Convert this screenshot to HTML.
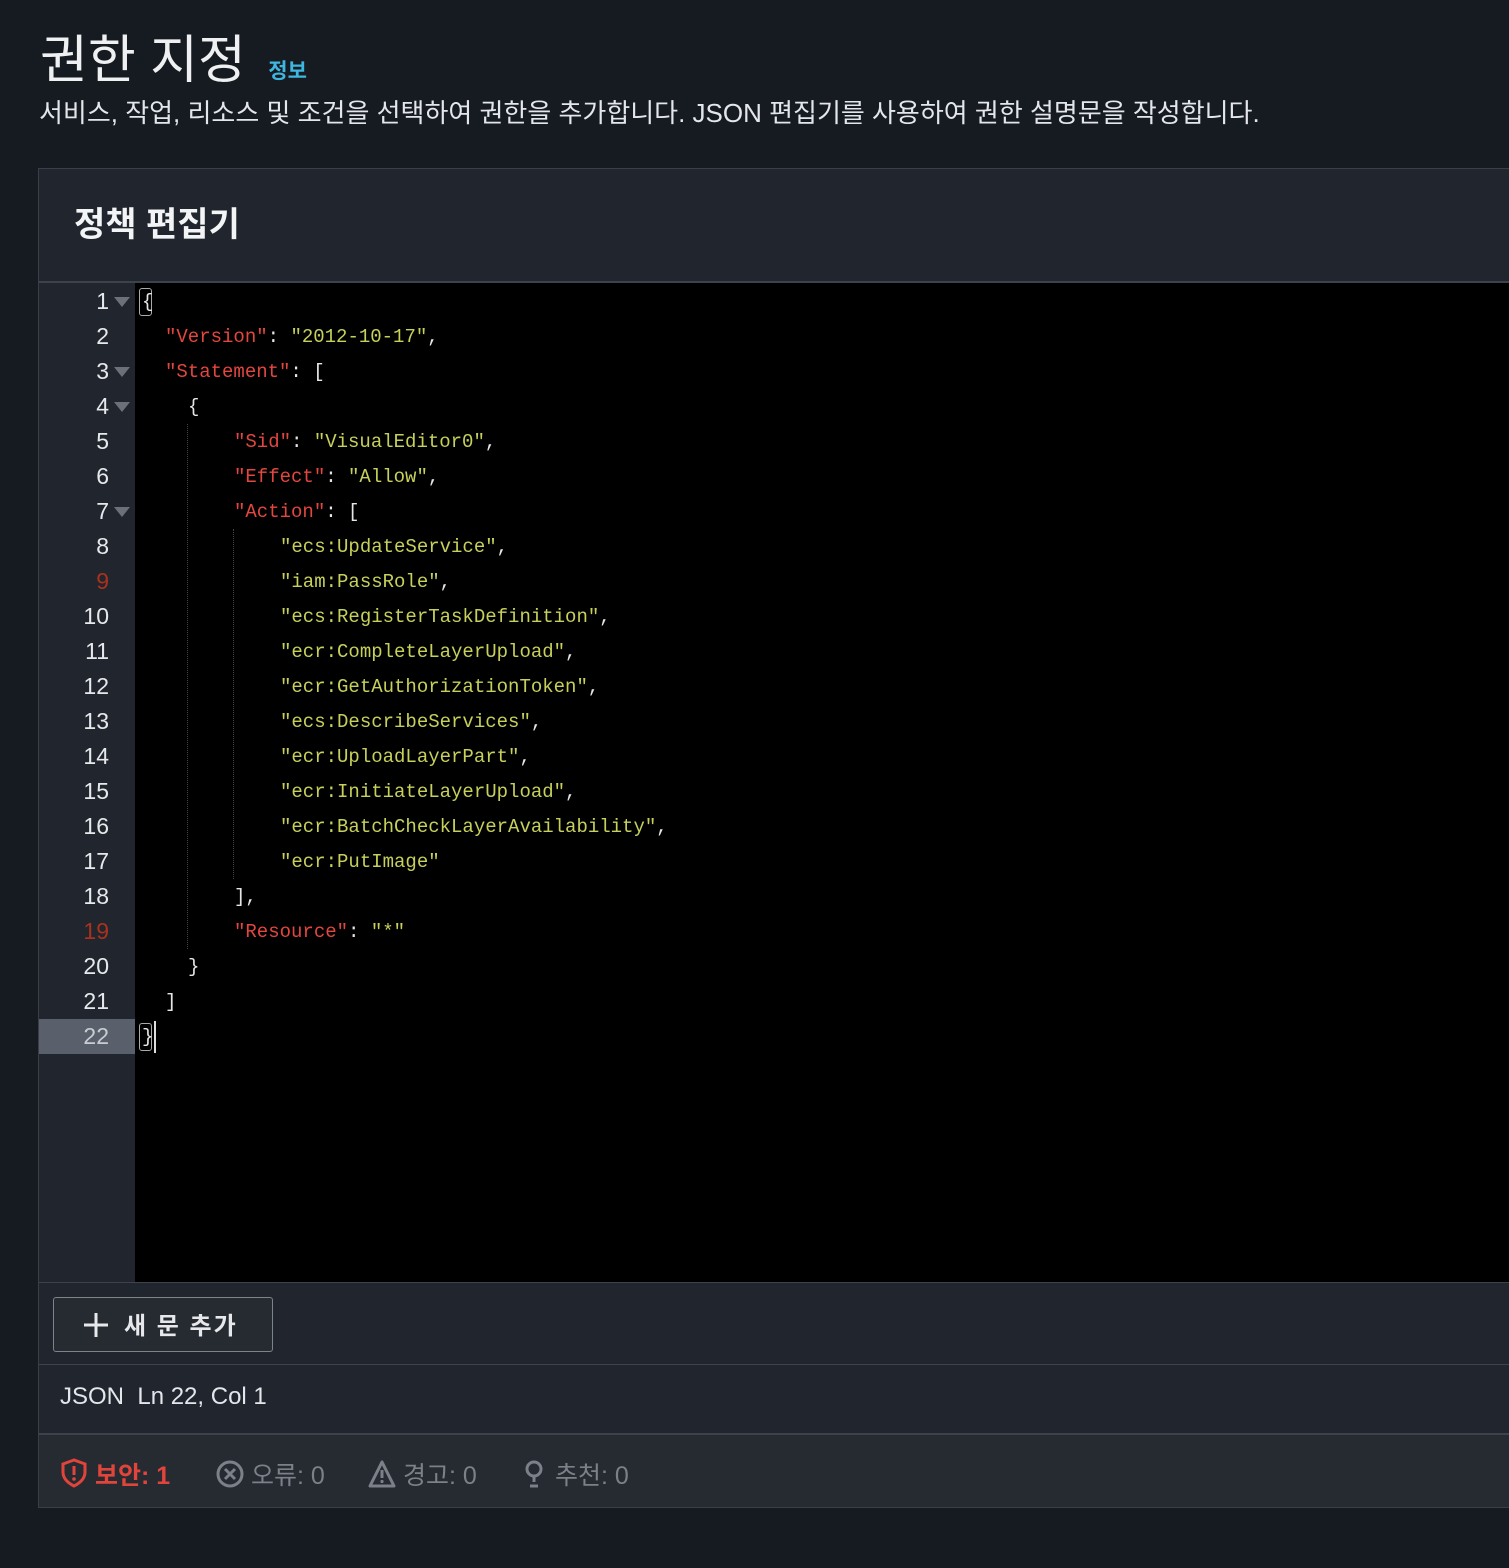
<!DOCTYPE html>
<html><head><meta charset="utf-8"><style>
*{margin:0;padding:0;box-sizing:border-box}
body{width:1509px;height:1568px;background:#161a21;font-family:"Liberation Sans","Noto Sans CJK KR",sans-serif;color:#e8eaed;position:relative;overflow:hidden}
.abs{position:absolute}
h1{position:absolute;left:40px;top:18px;font-size:52px;font-weight:400;color:#eef0f2;white-space:nowrap}
h1 span{font-size:21px;color:#3fb6e0;font-weight:700;margin-left:8px}
.desc{left:39px;top:93px;font-size:26px;color:#e3e6ea;white-space:nowrap}
.card{left:38px;top:168px;width:1480px;height:1340px;background:#21252d;border:1px solid #3a3f47}
.ed{left:39px;top:281px;width:1470px;height:1001px;background:#000;border-top:2px solid #3d434c}
.gut{left:39px;top:283px;width:96px;height:999px;background:#21252d}
.ln{position:absolute;left:39px;width:70px;text-align:right;font-family:"Liberation Sans",sans-serif;font-size:23px;color:#e6e8eb;line-height:35px}
.code{position:absolute;font-family:"Liberation Mono",monospace;font-size:19px;line-height:35px;color:#e6e6e6;white-space:pre;top:0}
.k{color:#e2463f}.s{color:#c6d05a}
.tri{position:absolute;left:114px;width:0;height:0;border-left:8px solid transparent;border-right:8px solid transparent;border-top:10px solid #6b7079}
.g{position:absolute;width:0;border-left:1px dotted #444}
</style></head><body>
<h1>권한 지정 <span>정보</span></h1>
<div class="abs desc">서비스, 작업, 리소스 및 조건을 선택하여 권한을 추가합니다. JSON 편집기를 사용하여 권한 설명문을 작성합니다.</div>
<div class="abs card"></div>
<div class="abs" style="left:74px;top:197px;font-size:34px;font-weight:700;color:#f2f4f6">정책 편집기</div>
<div class="abs ed"></div>
<div class="abs gut"></div>
<div class="abs" style="left:39px;top:1019px;width:96px;height:35px;background:#59606b"></div>
<div class="abs" style="left:39px;top:1282px;width:1470px;height:1px;background:#3d434c"></div>

<div class="ln" style="top:284px">1</div><div class="ln" style="top:319px">2</div><div class="ln" style="top:354px">3</div><div class="ln" style="top:389px">4</div><div class="ln" style="top:424px">5</div><div class="ln" style="top:459px">6</div><div class="ln" style="top:494px">7</div><div class="ln" style="top:529px">8</div><div class="ln" style="top:564px;color:#a8321e">9</div><div class="ln" style="top:599px">10</div><div class="ln" style="top:634px">11</div><div class="ln" style="top:669px">12</div><div class="ln" style="top:704px">13</div><div class="ln" style="top:739px">14</div><div class="ln" style="top:774px">15</div><div class="ln" style="top:809px">16</div><div class="ln" style="top:844px">17</div><div class="ln" style="top:879px">18</div><div class="ln" style="top:914px;color:#a8321e">19</div><div class="ln" style="top:949px">20</div><div class="ln" style="top:984px">21</div><div class="ln" style="top:1019px;color:#c9cdd2">22</div>
<div class="tri" style="top:297px"></div><div class="tri" style="top:367px"></div><div class="tri" style="top:402px"></div><div class="tri" style="top:507px"></div>

<div class="g" style="left:187px;top:424px;height:525px"></div>
<div class="g" style="left:233px;top:529px;height:350px"></div>
<div class="abs" style="left:139px;top:288px;width:13px;height:28px;border:1px solid #aaa;border-radius:3px"></div>
<div class="abs" style="left:139px;top:1023px;width:13px;height:28px;border:1px solid #aaa;border-radius:3px"></div>
<div class="abs" style="left:154px;top:1021px;width:2px;height:32px;background:#ddd"></div>

<div style="position:absolute;left:0;top:1px;width:1509px">
<div class="code" style="left:142px;top:284px">{</div>
<div class="code" style="left:165px;top:319px"><span class="k">"Version"</span>: <span class="s">"2012-10-17"</span>,</div>
<div class="code" style="left:165px;top:354px"><span class="k">"Statement"</span>: [</div>
<div class="code" style="left:188px;top:389px">{</div>
<div class="code" style="left:234px;top:424px"><span class="k">"Sid"</span>: <span class="s">"VisualEditor0"</span>,</div>
<div class="code" style="left:234px;top:459px"><span class="k">"Effect"</span>: <span class="s">"Allow"</span>,</div>
<div class="code" style="left:234px;top:494px"><span class="k">"Action"</span>: [</div>
<div class="code s" style="left:280px;top:529px">"ecs:UpdateService"<span style="color:#e6e6e6">,</span></div>
<div class="code s" style="left:280px;top:564px">"iam:PassRole"<span style="color:#e6e6e6">,</span></div>
<div class="code s" style="left:280px;top:599px">"ecs:RegisterTaskDefinition"<span style="color:#e6e6e6">,</span></div>
<div class="code s" style="left:280px;top:634px">"ecr:CompleteLayerUpload"<span style="color:#e6e6e6">,</span></div>
<div class="code s" style="left:280px;top:669px">"ecr:GetAuthorizationToken"<span style="color:#e6e6e6">,</span></div>
<div class="code s" style="left:280px;top:704px">"ecs:DescribeServices"<span style="color:#e6e6e6">,</span></div>
<div class="code s" style="left:280px;top:739px">"ecr:UploadLayerPart"<span style="color:#e6e6e6">,</span></div>
<div class="code s" style="left:280px;top:774px">"ecr:InitiateLayerUpload"<span style="color:#e6e6e6">,</span></div>
<div class="code s" style="left:280px;top:809px">"ecr:BatchCheckLayerAvailability"<span style="color:#e6e6e6">,</span></div>
<div class="code s" style="left:280px;top:844px">"ecr:PutImage"</div>
<div class="code" style="left:234px;top:879px">],</div>
<div class="code" style="left:234px;top:914px"><span class="k">"Resource"</span>: <span class="s">"*"</span></div>
<div class="code" style="left:188px;top:949px">}</div>
<div class="code" style="left:165px;top:984px">]</div>
<div class="code" style="left:142px;top:1019px">}</div>
</div>

<div class="abs" style="left:53px;top:1297px;width:220px;height:55px;border:1px solid #7d838b;border-radius:3px;background:#262a31"></div>
<svg class="abs" style="left:82px;top:1311px" width="28" height="28"><path d="M14 2v24M2 14h24" stroke="#e6e8eb" stroke-width="3"/></svg>
<div class="abs" style="left:124px;top:1306px;font-size:24px;font-weight:700;letter-spacing:2px;color:#e6e8eb">새 문 추가</div>
<div class="abs" style="left:39px;top:1364px;width:1470px;height:1px;background:#3d434c"></div>
<div class="abs" style="left:60px;top:1383px;font-size:24px;color:#e3e6ea;white-space:pre">JSON  Ln 22, Col 1</div>
<div class="abs" style="left:39px;top:1433px;width:1470px;height:2px;background:#3d434c"></div>
<div class="abs" style="left:39px;top:1435px;width:1470px;height:72px;background:#262a31"></div>
<svg class="abs" style="left:60px;top:1458px" width="28" height="30"><path d="M14 2L3 6v8c0 7 5 11 11 14 6-3 11-7 11-14V6z" fill="none" stroke="#e0443b" stroke-width="3"/><path d="M14 8v9" stroke="#e0443b" stroke-width="3"/><circle cx="14" cy="21" r="1.8" fill="#e0443b"/></svg>
<div class="abs" style="left:95px;top:1456px;font-size:25px;font-weight:700;color:#e0443b">보안: 1</div>
<svg class="abs" style="left:215px;top:1459px" width="30" height="30"><circle cx="15" cy="15" r="12" fill="none" stroke="#7b8089" stroke-width="3"/><path d="M10 10l10 10M20 10l-10 10" stroke="#7b8089" stroke-width="3"/></svg>
<div class="abs" style="left:251px;top:1456px;font-size:25px;color:#7b8089">오류: 0</div>
<svg class="abs" style="left:367px;top:1459px" width="30" height="30"><path d="M15 3L3 27h24z" fill="none" stroke="#7b8089" stroke-width="3" stroke-linejoin="round"/><path d="M15 11v8" stroke="#7b8089" stroke-width="3"/><circle cx="15" cy="22.5" r="1.6" fill="#7b8089"/></svg>
<div class="abs" style="left:403px;top:1456px;font-size:25px;color:#7b8089">경고: 0</div>
<svg class="abs" style="left:522px;top:1459px" width="24" height="30"><circle cx="12" cy="10" r="7" fill="none" stroke="#7b8089" stroke-width="3"/><path d="M12 17v6M8 27h8" stroke="#7b8089" stroke-width="3"/></svg>
<div class="abs" style="left:555px;top:1456px;font-size:25px;color:#7b8089">추천: 0</div>
</body></html>
